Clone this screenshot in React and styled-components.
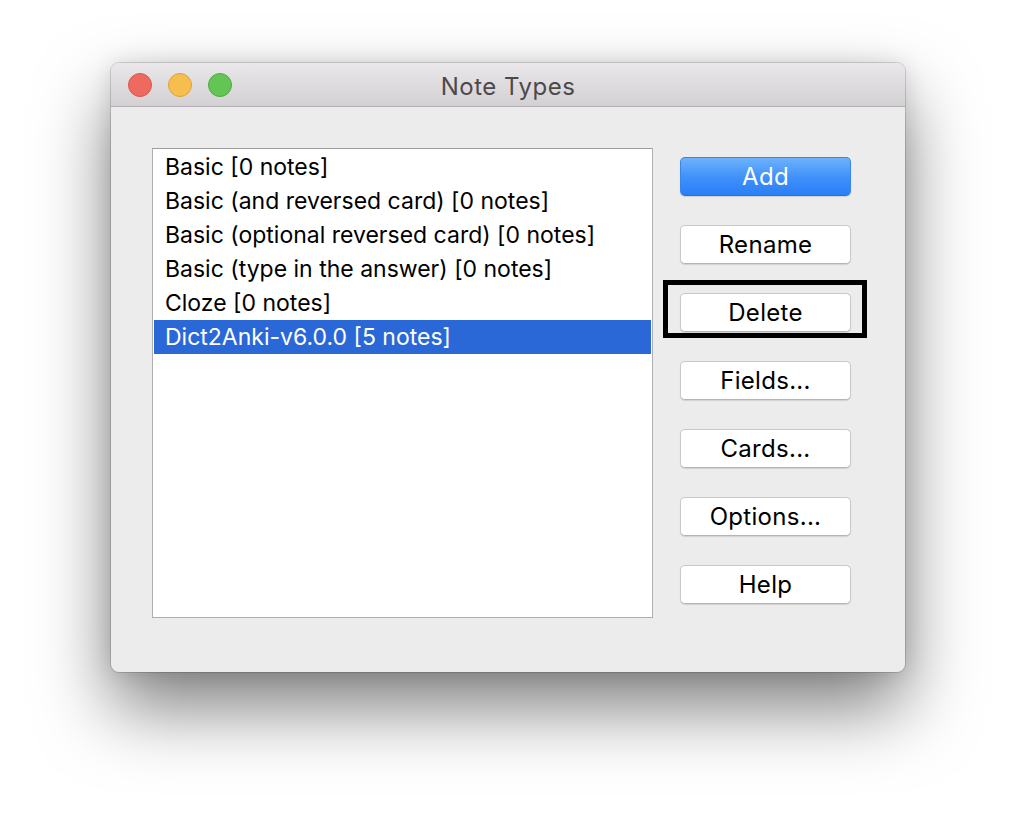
import React from 'react';
import styled, { createGlobalStyle } from 'styled-components';

const GlobalStyle = createGlobalStyle`
  html, body {
    margin: 0;
    padding: 0;
    background: #ffffff;
  }
  body {
    font-family: Inter, "Liberation Sans", Arial, sans-serif;
  }
`;

const Page = styled.div`
  padding: 63px 0 0 111px;
  min-height: 832px;
  box-sizing: border-box;
`;

const Window = styled.div`
  width: 794px;
  height: 609px;
  border-radius: 8px;
  background: #ececec;
  overflow: hidden;
  display: flex;
  flex-direction: column;
  box-shadow: 0 0 0 1px rgba(0, 0, 0, 0.14), 0 0 22px rgba(0, 0, 0, 0.12),
    0 36px 72px rgba(0, 0, 0, 0.5);
`;

const TitleBar = styled.div`
  height: 44px;
  flex-shrink: 0;
  display: grid;
  grid-template-columns: 1fr auto 1fr;
  align-items: center;
  background: linear-gradient(#e9e7e9, #d3d1d3);
  border-bottom: 1px solid #b3b1b3;
  box-sizing: border-box;
`;

const Lights = styled.div`
  display: flex;
  gap: 16px;
  padding-left: 17px;
  padding-top: 1px;
`;

const Light = styled.span`
  width: 24px;
  height: 24px;
  border-radius: 50%;
  box-sizing: border-box;
  background: ${p => p.fill};
  border: 1px solid ${p => p.edge};
`;

const Title = styled.div`
  font-size: 24px;
  color: #4b4a4b;
  letter-spacing: 0.5px;
  padding-top: 3px;
`;

const Body = styled.div`
  flex: 1;
  display: flex;
  gap: 27px;
  padding: 41px 54px 53px 41px;
`;

const List = styled.div`
  width: 501px;
  height: 470px;
  box-sizing: border-box;
  background: #ffffff;
  border: 1px solid #aeaeae;
  border-top-color: #9c9c9c;
  padding: 1px;
`;

const Row = styled.div`
  height: 34px;
  line-height: 34px;
  padding-left: 11px;
  font-size: 23px;
  white-space: nowrap;
  color: ${p => (p.selected ? '#ffffff' : '#000000')};
  background: ${p => (p.selected ? '#2a68d8' : 'transparent')};
`;

const Buttons = styled.div`
  width: 171px;
  display: flex;
  flex-direction: column;
  gap: 29px;
  padding-top: 9px;
`;

const ButtonWrap = styled.div`
  position: relative;
`;

const Highlight = styled.span`
  position: absolute;
  top: -13px;
  left: -17px;
  right: -16px;
  bottom: -6px;
  border: 5px solid #000000;
  pointer-events: none;
`;

const Button = styled.button`
  width: 171px;
  height: 39px;
  box-sizing: border-box;
  border-radius: 5px;
  font-family: Inter, "Liberation Sans", Arial, sans-serif;
  font-size: 24px;
  letter-spacing: 0.3px;
  padding: 0 0 1px;
  cursor: default;
  color: ${p => (p.primary ? '#ffffff' : '#000000')};
  background: ${p =>
    p.primary ? 'linear-gradient(#6db2fb, #3d8ffb 55%, #2b7ff6)' : '#ffffff'};
  border: 1px solid ${p => (p.primary ? '#3b84ea' : '#c9c9c9')};
  border-bottom-color: ${p => (p.primary ? '#2a6fd6' : '#b4b4b4')};
  box-shadow: 0 1px 1px rgba(0, 0, 0, 0.12);
`;

const noteTypes = [
  { name: 'Basic', count: 0 },
  { name: 'Basic (and reversed card)', count: 0 },
  { name: 'Basic (optional reversed card)', count: 0 },
  { name: 'Basic (type in the answer)', count: 0 },
  { name: 'Cloze', count: 0 },
  { name: 'Dict2Anki-v6.0.0', count: 5 },
];

const actions = ['Add', 'Rename', 'Delete', 'Fields...', 'Cards...', 'Options...', 'Help'];

const App = () => {
  const selected = 5;
  return (
    <Page>
      <GlobalStyle />
      <Window>
        <TitleBar>
          <Lights>
            <Light fill="#ee6a5e" edge="#d9574c" />
            <Light fill="#f5be4f" edge="#dea236" />
            <Light fill="#62c554" edge="#4eab40" />
          </Lights>
          <Title>Note Types</Title>
          <div />
        </TitleBar>
        <Body>
          <List>
            {noteTypes.map((type, i) => (
              <Row key={type.name} selected={i === selected}>
                {type.name} [{type.count} notes]
              </Row>
            ))}
          </List>
          <Buttons>
            {actions.map(label => (
              <ButtonWrap key={label}>
                <Button primary={label === 'Add'}>{label}</Button>
                {label === 'Delete' && <Highlight />}
              </ButtonWrap>
            ))}
          </Buttons>
        </Body>
      </Window>
    </Page>
  );
};

export default App;
